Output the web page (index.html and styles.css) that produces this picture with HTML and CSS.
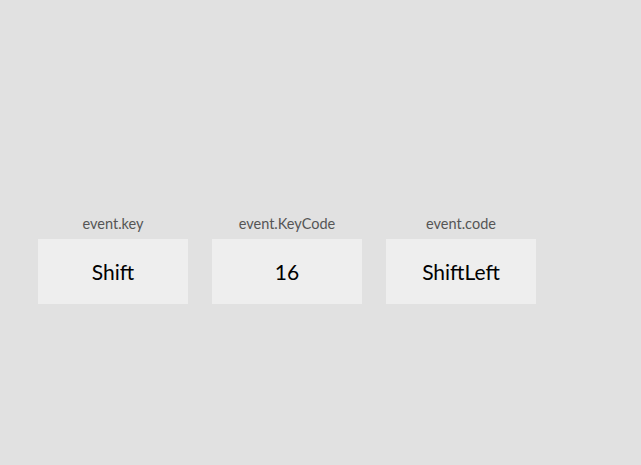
FILE: index.html
```html
<!DOCTYPE html>
<html lang="en">
<head>
  <meta charset="UTF-8">
  <meta name="viewport" content="width=device-width, initial-scale=1.0">
  <title>Key codes</title>
  <link rel="stylesheet" href="styles.css">
</head>
<body>
  <div class="keys">
    <div class="key">
      <div class="key-label">event.key</div>
      <div class="key-value">Shift</div>
    </div>
    <div class="key">
      <div class="key-label">event.KeyCode</div>
      <div class="key-value">16</div>
    </div>
    <div class="key">
      <div class="key-label">event.code</div>
      <div class="key-value">ShiftLeft</div>
    </div>
  </div>
</body>
</html>
```
FILE: styles.css
```css
body {
  margin: 0;
  font-family: Lato, "Open Sans", sans-serif;
  background: #e1e1e1;
  min-height: 100vh;
}
.keys {
  display: flex;
  gap: 24px;
  padding: 214px 0 0 38px;
}
.key {
  width: 150px;
  text-align: center;
}
.key-label {
  font-size: 14.5px;
  line-height: 20px;
  color: #555;
  margin-bottom: 5px;
}
.key-value {
  background: #eeeeee;
  height: 65px;
  line-height: 65px;
  font-size: 21px;
  color: #000;
}
```
